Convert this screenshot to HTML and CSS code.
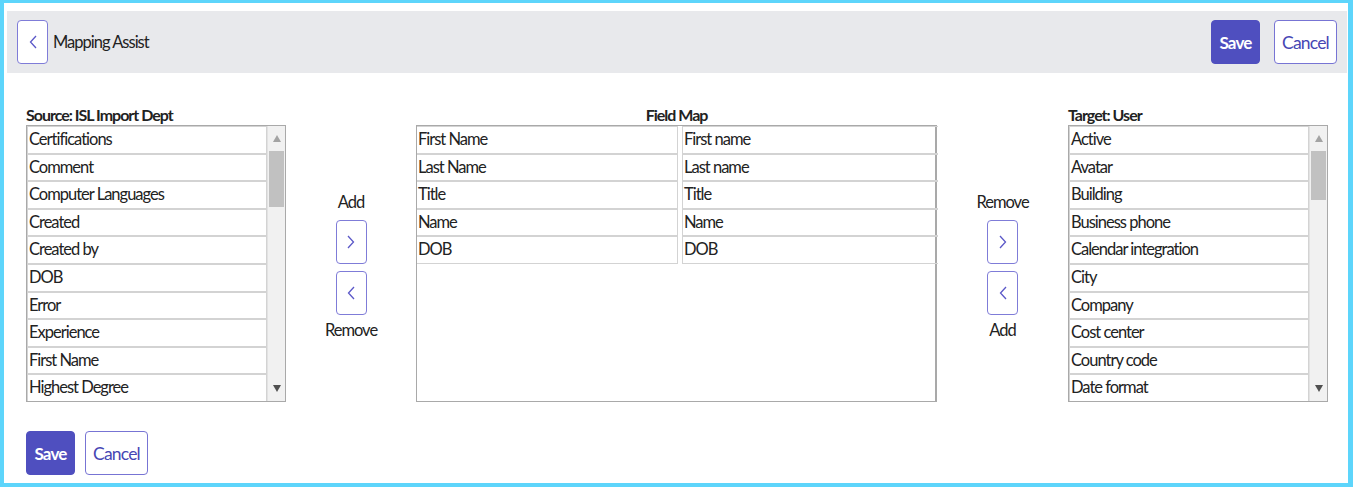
FILE: index.html
```html
<!DOCTYPE html>
<html lang="en">
<head>
  <meta charset="UTF-8" />
  <title>Mapping Assist</title>
  <link rel="stylesheet" href="styles.css">
</head>
<body>
  <div class="frame">
    <header class="topbar">
      <div class="title-wrap">
        <button class="icon-btn back" type="button" aria-label="Back">
          <svg width="8" height="14" viewBox="0 0 8 14"><path d="M7 1 L1.5 7 L7 13" fill="none" stroke="#5b58c8" stroke-width="1.3"/></svg>
        </button>
        <span class="title">Mapping Assist</span>
      </div>
      <div class="actions">
        <button class="btn primary" type="button">Save</button>
        <button class="btn outline" type="button">Cancel</button>
      </div>
    </header>

    <main class="mapper">
      <section class="col">
        <div class="col-label">Source: ISL Import Dept</div>
        <div class="listbox">
          <div class="items">
            <div class="item">Certifications</div>
            <div class="item">Comment</div>
            <div class="item">Computer Languages</div>
            <div class="item">Created</div>
            <div class="item">Created by</div>
            <div class="item">DOB</div>
            <div class="item">Error</div>
            <div class="item">Experience</div>
            <div class="item">First Name</div>
            <div class="item">Highest Degree</div>
          </div>
          <div class="scrollbar">
            <span class="arrow up"></span>
            <span class="thumb"></span>
            <span class="arrow down"></span>
          </div>
        </div>
      </section>

      <section class="mover">
        <span class="mover-label">Add</span>
        <button class="icon-btn" type="button" aria-label="Add">
          <svg width="8" height="14" viewBox="0 0 8 14"><path d="M1 1 L6.5 7 L1 13" fill="none" stroke="#5b58c8" stroke-width="1.3"/></svg>
        </button>
        <button class="icon-btn" type="button" aria-label="Remove">
          <svg width="8" height="14" viewBox="0 0 8 14"><path d="M7 1 L1.5 7 L7 13" fill="none" stroke="#5b58c8" stroke-width="1.3"/></svg>
        </button>
        <span class="mover-label">Remove</span>
      </section>

      <section class="col">
        <div class="col-label center">Field Map</div>
        <div class="fieldmap">
          <div class="cell">First Name</div><div class="cell">First name</div>
          <div class="cell">Last Name</div><div class="cell">Last name</div>
          <div class="cell">Title</div><div class="cell">Title</div>
          <div class="cell">Name</div><div class="cell">Name</div>
          <div class="cell">DOB</div><div class="cell">DOB</div>
        </div>
      </section>

      <section class="mover">
        <span class="mover-label">Remove</span>
        <button class="icon-btn" type="button" aria-label="Remove">
          <svg width="8" height="14" viewBox="0 0 8 14"><path d="M1 1 L6.5 7 L1 13" fill="none" stroke="#5b58c8" stroke-width="1.3"/></svg>
        </button>
        <button class="icon-btn" type="button" aria-label="Add">
          <svg width="8" height="14" viewBox="0 0 8 14"><path d="M7 1 L1.5 7 L7 13" fill="none" stroke="#5b58c8" stroke-width="1.3"/></svg>
        </button>
        <span class="mover-label">Add</span>
      </section>

      <section class="col">
        <div class="col-label">Target: User</div>
        <div class="listbox">
          <div class="items">
            <div class="item">Active</div>
            <div class="item">Avatar</div>
            <div class="item">Building</div>
            <div class="item">Business phone</div>
            <div class="item">Calendar integration</div>
            <div class="item">City</div>
            <div class="item">Company</div>
            <div class="item">Cost center</div>
            <div class="item">Country code</div>
            <div class="item">Date format</div>
          </div>
          <div class="scrollbar">
            <span class="arrow up"></span>
            <span class="thumb short"></span>
            <span class="arrow down"></span>
          </div>
        </div>
      </section>
    </main>

    <footer class="bottom-actions">
      <button class="btn primary" type="button">Save</button>
      <button class="btn outline" type="button">Cancel</button>
    </footer>
  </div>
</body>
</html>
```

FILE: styles.css
```css
* { box-sizing: border-box; }
body { margin: 0; font-family: Lato, "Open Sans", sans-serif; color: #222; background: #fff; }

.frame {
  width: 1353px;
  height: 487px;
  border: solid #5dd5fb;
  border-width: 3px 5px 4px 4px;
  background: #fff;
  overflow: hidden;
}

.topbar {
  display: flex;
  justify-content: space-between;
  align-items: center;
  height: 62px;
  margin: 8px 1px 0 3px;
  padding: 0 10px;
  background: #e8e9ec;
}
.title-wrap { display: flex; align-items: center; gap: 5px; }
.title { font-size: 16.5px; letter-spacing: -1px; color: #222; }
.actions { display: flex; gap: 14px; }

.btn {
  height: 44px;
  padding: 0;
  border-radius: 4px;
  font-family: inherit;
  font-size: 17px;
  letter-spacing: -0.8px;
  cursor: pointer;
}
.btn.primary { background: #4f4fbf; border: 1px solid #4f4fbf; color: #fff; font-weight: bold; width: 49px; }
.btn.outline { background: #fff; border: 1px solid #7774d4; color: #4646b4; width: 63px; font-size: 17.5px; }

.icon-btn {
  width: 31px;
  height: 44px;
  padding: 0;
  display: flex;
  align-items: center;
  justify-content: center;
  background: #fff;
  border: 1.5px solid #7f7cd8;
  border-radius: 4px;
  cursor: pointer;
}

.mapper {
  display: grid;
  grid-template-columns: 260px 130px 521px 131px 260px;
  margin: 32px 0 0 22px;
}
.col { display: flex; flex-direction: column; }
.col-label { font-size: 16px; font-weight: bold; letter-spacing: -1px; height: 20px; line-height: 20px; color: #222; }
.col-label.center { text-align: center; }

.listbox {
  display: flex;
  height: 277px;
  border: 1px solid #a9a9a9;
  overflow: hidden;
}
.items { flex: 1; display: flex; flex-direction: column; }
.item, .cell {
  height: 27.6px;
  flex: none;
  padding: 0 1px;
  border: 1px solid #d3d3d3;
  font-size: 16.5px;
  letter-spacing: -1px;
  line-height: 25px;
  white-space: nowrap;
  color: #222;
}

.scrollbar {
  width: 18px;
  background: #f1f1f1;
  border-left: 1px solid #e2e2e2;
  display: flex;
  flex-direction: column;
  align-items: center;
}
.arrow { width: 0; height: 0; border-left: 4px solid transparent; border-right: 4px solid transparent; }
.arrow.up { border-bottom: 7px solid #a3a3a3; margin: 9px 0 9px; }
.arrow.down { border-top: 7px solid #505050; margin-top: auto; margin-bottom: 9px; }
.thumb { width: 15px; height: 56px; background: #c1c1c1; }
.thumb.short { height: 49px; }

.fieldmap {
  display: grid;
  grid-template-columns: 261px 256px;
  column-gap: 4px;
  align-content: start;
  height: 277px;
  border: 1px solid #a9a9a9;
  border-right-width: 2px;
}
.fieldmap .cell:nth-child(odd) { border-left: 0; }
.fieldmap .cell:nth-child(even) { border-right: 0; }

.mover {
  display: flex;
  flex-direction: column;
  align-items: center;
  justify-content: center;
  padding-top: 24px;
}
.mover .icon-btn { margin-top: 7px; }
.mover-label { font-size: 16.5px; letter-spacing: -1px; color: #222; line-height: 18px; }
.mover-label:first-child { margin-bottom: 2px; }
.mover-label:last-child { margin-top: 6px; }

.bottom-actions { display: flex; gap: 10px; margin: 29px 0 0 22px; }
```
